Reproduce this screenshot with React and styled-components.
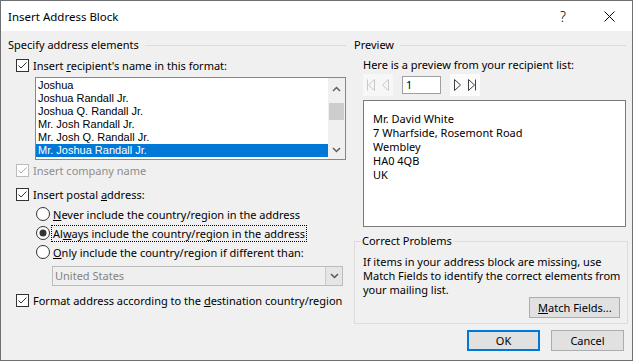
import React from "react";
import styled, { createGlobalStyle } from "styled-components";

const GlobalStyle = createGlobalStyle`
  html, body {
    margin: 0;
    padding: 0;
    background: #ffffff;
  }
  body {
    font-family: "Noto Sans", "DejaVu Sans", sans-serif;
    font-size: 11px;
    color: #000;
  }
  * {
    box-sizing: border-box;
  }
`;

const Window = styled.div`
  width: 633px;
  height: 361px;
  border: 1px solid #707070;
  background: #f0f0f0;
  display: flex;
  flex-direction: column;
`;

const TitleBar = styled.div`
  flex: none;
  height: 30px;
  background: #ffffff;
  display: flex;
  align-items: center;
  padding-left: 7px;
`;

const TitleText = styled.div`
  flex: 1;
  font-size: 11.5px;
`;

const TitleButton = styled.div`
  width: 46px;
  height: 30px;
  display: flex;
  align-items: center;
  justify-content: center;
  font-size: 14px;
  font-weight: 300;
`;

const Body = styled.div`
  flex: 1;
  display: grid;
  grid-template-columns: 338px 272px;
  column-gap: 8px;
  padding: 6px 6px 0 7px;
`;

const Column = styled.div`
  display: flex;
  flex-direction: column;
  align-items: flex-start;
`;

const GroupHeader = styled.div`
  align-self: stretch;
  display: flex;
  align-items: center;
  height: 16px;
  line-height: 16px;
  &::after {
    content: "";
    flex: 1;
    height: 1px;
    margin-left: 6px;
    background: #dcdcdc;
  }
`;

const CheckRow = styled.div`
  display: flex;
  align-items: center;
  gap: 4px;
  height: 16px;
  margin-top: ${(p) => p.$mt || 0}px;
  margin-left: 8px;
  color: ${(p) => (p.$disabled ? "#8d8d8d" : "#000")};
  white-space: nowrap;
`;

const RadioRow = styled.div`
  display: flex;
  align-items: center;
  gap: 3px;
  height: 16px;
  margin-top: ${(p) => p.$mt || 0}px;
  margin-left: 28px;
  white-space: nowrap;
`;

const FocusLabel = styled.span`
  line-height: 13px;
  outline: 1px dotted #000;
  outline-offset: 1px;
`;

const Key = styled.span`
  text-decoration: underline;
  text-underline-offset: 1px;
`;

const ListBox = styled.div`
  margin-top: 4px;
  margin-left: 27px;
  width: 311px;
  height: 83px;
  border: 1px solid #828790;
  background: #fff;
  display: flex;
`;

const ListItems = styled.div`
  flex: 1;
  padding-top: 1px;
`;

const ListItem = styled.div`
  height: 13px;
  line-height: 13px;
  padding-left: 2px;
  font-family: "Liberation Sans", Arial, sans-serif;
  font-size: 11px;
  background: ${(p) => (p.$selected ? "#0078d7" : "transparent")};
  color: ${(p) => (p.$selected ? "#fff" : "#000")};
  white-space: nowrap;
`;

const ScrollBar = styled.div`
  width: 17px;
  background: #f0f0f0;
  display: flex;
  flex-direction: column;
  align-items: center;
`;

const ScrollArrow = styled.div`
  height: 17px;
  width: 17px;
  display: flex;
  align-items: center;
  justify-content: center;
  margin-top: ${(p) => p.$mt || 0}px;
`;

const ScrollThumb = styled.div`
  width: 15px;
  height: 17px;
  margin-top: 6px;
  background: #cdcdcd;
`;

const Select = styled.div`
  margin-top: 6px;
  margin-left: 44px;
  width: 291px;
  height: 20px;
  border: 1px solid #bcbcbc;
  background: #efefef;
  display: flex;
  align-items: stretch;
  color: #838383;
`;

const SelectText = styled.div`
  flex: 1;
  padding-left: 2px;
  line-height: 18px;
`;

const SelectArrow = styled.div`
  width: 17px;
  background: #e5e5e5;
  border-left: 1px solid #cccccc;
  display: flex;
  align-items: center;
  justify-content: center;
`;

const Label = styled.div`
  margin-top: ${(p) => p.$mt || 0}px;
  margin-left: 9px;
  height: 16px;
  line-height: 16px;
  white-space: nowrap;
`;

const NavRow = styled.div`
  margin-top: 1px;
  margin-left: 9px;
  height: 22px;
  display: flex;
  align-items: center;
  gap: 9px;
`;

const NavGroup = styled.div`
  display: flex;
  height: 22px;
  background: ${(p) => (p.$disabled ? "#f7f7f7" : "#fcfcfc")};
`;

const NavButton = styled.div`
  width: 15px;
  display: flex;
  align-items: center;
  justify-content: center;
`;

const RecordInput = styled.div`
  width: 39px;
  height: 18px;
  border: 1px solid #a0a0a0;
  background: #fff;
  padding-left: 3px;
  line-height: 16px;
`;

const PreviewBox = styled.div`
  margin-top: 4px;
  margin-left: 9px;
  width: 263px;
  height: 127px;
  border: 1px solid #7a7a7a;
  background: #fff;
  padding: 11px 0 0 9px;
`;

const PreviewLine = styled.div`
  height: 14px;
  line-height: 14px;
  white-space: nowrap;
`;

const Fieldset = styled.fieldset`
  margin: 6px 0 0 0;
  padding: 0 7px 5px 8px;
  width: 270px;
  border: 1px solid #dcdcdc;
  display: flex;
  flex-direction: column;
  align-items: flex-start;
`;

const Legend = styled.legend`
  margin-left: -2px;
  padding: 0 1px;
  line-height: 16px;
`;

const Paragraph = styled.div`
  margin-top: 6px;
  line-height: 14px;
  white-space: nowrap;
`;

const Button = styled.div`
  width: ${(p) => p.$w || 73}px;
  height: 21px;
  display: flex;
  align-items: center;
  justify-content: center;
  background: #e1e1e1;
  border: ${(p) => (p.$default ? "2px solid #0078d7" : "1px solid #adadad")};
  align-self: ${(p) => p.$align || "auto"};
`;

const ButtonRow = styled.div`
  align-self: stretch;
  margin-top: 6px;
  padding-right: 2px;
  display: flex;
  justify-content: flex-end;
  gap: 11px;
`;

const CheckBox = ({ checked, disabled }) => {
  const c = disabled ? "#bcbcbc" : "#333333";
  return (
    <svg width="13" height="13" viewBox="0 0 13 13">
      <rect x="0.5" y="0.5" width="12" height="12" fill="#fff" stroke={c} />
      {checked && (
        <path d="M2.5 6.5 L5 9 L10.5 3.5" fill="none" stroke={disabled ? "#a8a8a8" : "#333"} strokeWidth="1" />
      )}
    </svg>
  );
};

const Radio = ({ checked }) => (
  <svg width="14" height="14" viewBox="0 0 14 14">
    <circle cx="7" cy="7" r="6.5" fill="#fff" stroke="#333" />
    {checked && <circle cx="7" cy="7" r="3.5" fill="#333" />}
  </svg>
);

const Chevron = ({ up, color = "#606060" }) => (
  <svg width="9" height="6" viewBox="0 0 9 6">
    <path
      d={up ? "M1 5 L4.5 1.5 L8 5" : "M1 1 L4.5 4.5 L8 1"}
      fill="none"
      stroke={color}
      strokeWidth="1.5"
    />
  </svg>
);

const NavIcon = ({ kind, disabled }) => {
  const c = disabled ? "#c8c8c8" : "#404040";
  const paths = {
    first: "M1.5 0.5 V11.5 M8.5 0.5 L2.5 6 L8.5 11.5 Z",
    prev: "M7.5 0.5 L1.5 6 L7.5 11.5 Z",
    next: "M1.5 0.5 L7.5 6 L1.5 11.5 Z",
    last: "M0.5 0.5 L6.5 6 L0.5 11.5 Z M7.5 0.5 V11.5",
  };
  return (
    <svg width="9" height="12" viewBox="0 0 9 12">
      <path d={paths[kind]} fill="none" stroke={c} strokeWidth="1" />
    </svg>
  );
};

const names = [
  "Joshua",
  "Joshua Randall Jr.",
  "Joshua Q. Randall Jr.",
  "Mr. Josh Randall Jr.",
  "Mr. Josh Q. Randall Jr.",
  "Mr. Joshua Randall Jr.",
];

const address = [
  "Mr. David White",
  "7 Wharfside, Rosemont Road",
  "Wembley",
  "HA0 4QB",
  "UK",
];

export default function App() {
  return (
    <>
      <GlobalStyle />
      <Window>
        <TitleBar>
          <TitleText>Insert Address Block</TitleText>
          <TitleButton>?</TitleButton>
          <TitleButton>
            <svg width="11" height="11" viewBox="0 0 11 11">
              <path d="M0.5 0.5 L10.5 10.5 M10.5 0.5 L0.5 10.5" stroke="#000" strokeWidth="1" />
            </svg>
          </TitleButton>
        </TitleBar>
        <Body>
          <Column>
            <GroupHeader>Specify address elements</GroupHeader>
            <CheckRow $mt={4}>
              <CheckBox checked />
              <span>
                Insert <Key>r</Key>ecipient's name in this format:
              </span>
            </CheckRow>
            <ListBox>
              <ListItems>
                {names.map((n, i) => (
                  <ListItem key={n} $selected={i === names.length - 1}>
                    {n}
                  </ListItem>
                ))}
              </ListItems>
              <ScrollBar>
                <ScrollArrow $mt={2}>
                  <Chevron up />
                </ScrollArrow>
                <ScrollThumb />
                <ScrollArrow $mt={21}>
                  <Chevron />
                </ScrollArrow>
              </ScrollBar>
            </ListBox>
            <CheckRow $mt={2} $disabled>
              <CheckBox checked disabled />
              <span>Insert company name</span>
            </CheckRow>
            <CheckRow $mt={8}>
              <CheckBox checked />
              <span>
                Insert postal <Key>a</Key>ddress:
              </span>
            </CheckRow>
            <RadioRow $mt={4}>
              <Radio />
              <span>
                <Key>N</Key>ever include the country/region in the address
              </span>
            </RadioRow>
            <RadioRow $mt={3}>
              <Radio checked />
              <FocusLabel>
                Al<Key>w</Key>ays include the country/region in the address
              </FocusLabel>
            </RadioRow>
            <RadioRow $mt={3}>
              <Radio />
              <span>
                <Key>O</Key>nly include the country/region if different than:
              </span>
            </RadioRow>
            <Select>
              <SelectText>United States</SelectText>
              <SelectArrow>
                <Chevron color="#555" />
              </SelectArrow>
            </Select>
            <CheckRow $mt={6}>
              <CheckBox checked />
              <span>
                Format address according to the <Key>d</Key>estination country/region
              </span>
            </CheckRow>
          </Column>

          <Column>
            <GroupHeader>Preview</GroupHeader>
            <Label $mt={4}>Here is a preview from your recipient list:</Label>
            <NavRow>
              <NavGroup $disabled>
                <NavButton>
                  <NavIcon kind="first" disabled />
                </NavButton>
                <NavButton>
                  <NavIcon kind="prev" disabled />
                </NavButton>
              </NavGroup>
              <RecordInput>1</RecordInput>
              <NavGroup>
                <NavButton>
                  <NavIcon kind="next" />
                </NavButton>
                <NavButton>
                  <NavIcon kind="last" />
                </NavButton>
              </NavGroup>
            </NavRow>
            <PreviewBox>
              {address.map((l) => (
                <PreviewLine key={l}>{l}</PreviewLine>
              ))}
            </PreviewBox>
            <Fieldset>
              <Legend>Correct Problems</Legend>
              <Paragraph>
                If items in your address block are missing, use
                <br />
                Match Fields to identify the correct elements from
                <br />
                your mailing list.
              </Paragraph>
              <Button $w={91} $align="flex-end">
                <span>
                  <Key>M</Key>atch Fields...
                </span>
              </Button>
            </Fieldset>
            <ButtonRow>
              <Button $default>OK</Button>
              <Button>Cancel</Button>
            </ButtonRow>
          </Column>
        </Body>
      </Window>
    </>
  );
}
